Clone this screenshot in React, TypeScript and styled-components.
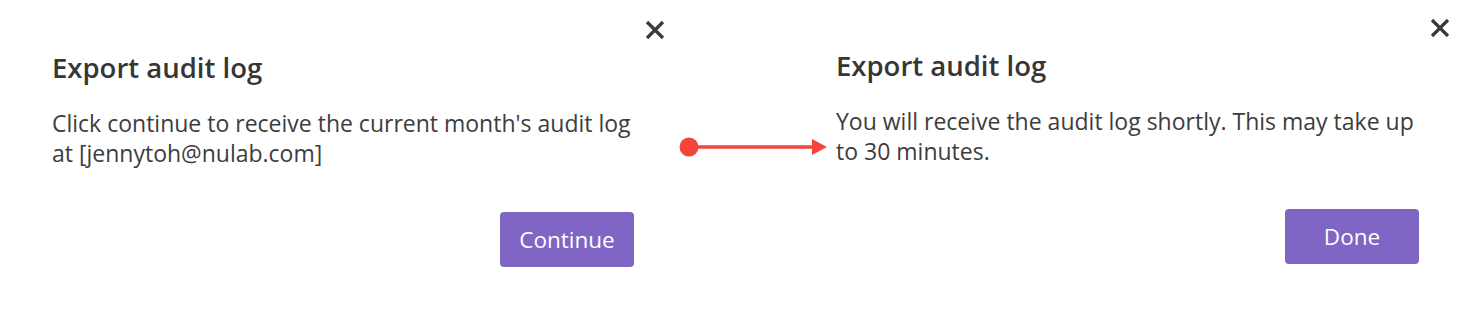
import * as React from 'react';
import styled, { createGlobalStyle } from 'styled-components';

const GlobalStyle = createGlobalStyle`
    html, body {
        margin: 0;
        padding: 0;
        background: #ffffff;
    }
    body {
        font-family: 'Open Sans', 'Noto Sans', sans-serif;
        color: #3a3a3a;
    }
`;

const Page = styled.div`
    display: flex;
    width: 1473px;
    height: 317px;
    background: #fff;
    overflow: hidden;
`;

const Dialog = styled.div<{ $width: number; $left: number; $top: number }>`
    position: relative;
    display: flex;
    flex-direction: column;
    width: ${p => p.$width}px;
    box-sizing: border-box;
    padding: ${p => p.$top}px 54px 0 ${p => p.$left}px;
`;

const CloseRow = styled.div`
    display: flex;
    justify-content: flex-end;
    margin-right: -31px;
    height: 20px;
`;

const CloseButton = styled.button`
    width: 20px;
    height: 20px;
    padding: 0;
    border: none;
    background: transparent;
    cursor: pointer;
    display: flex;
    align-items: center;
    justify-content: center;
`;

const Title = styled.h2`
    margin: 10px 0 0;
    font-size: 27.5px;
    font-weight: 600;
    line-height: 36px;
    color: #363636;
`;

const Body = styled.p<{ $max: number }>`
    margin: 22px 0 0;
    max-width: ${p => p.$max}px;
    font-size: 23px;
    line-height: 30px;
    color: #3d3d3d;
`;

const Footer = styled.div<{ $gap: number }>`
    display: flex;
    justify-content: flex-end;
    margin-top: ${p => p.$gap}px;
`;

const PrimaryButton = styled.button`
    width: 134px;
    height: 55px;
    border: none;
    border-radius: 4px;
    background: #7f66c4;
    color: #ffffff;
    font-family: 'Open Sans', 'Noto Sans', sans-serif;
    font-size: 22.5px;
    font-weight: 400;
    cursor: pointer;
`;

const Arrow = styled.svg`
    position: absolute;
    left: -10px;
    top: 135px;
`;

const CloseIcon = () => (
    <svg width="20" height="20" viewBox="0 0 20 20">
        <path d="M2 2 L18 18 M18 2 L2 18" stroke="#3a3a3a" strokeWidth="3.2" strokeLinecap="butt" />
    </svg>
);

const ExportDialog = (props) => {
    return (
        <Dialog $width={props.width} $left={props.left} $top={props.top}>
            {props.children}
            <CloseRow>
                <CloseButton aria-label="Close"><CloseIcon /></CloseButton>
            </CloseRow>
            <Title>Export audit log</Title>
            <Body $max={props.maxText}>{props.text}</Body>
            <Footer $gap={props.gap}>
                <PrimaryButton>{props.buttonText}</PrimaryButton>
            </Footer>
        </Dialog>
    );
};

export default function App() {
    return (
        <Page>
            <GlobalStyle />
            <ExportDialog
                width={688} left={52} top={20} gap={44} maxText={600}
                text="Click continue to receive the current month's audit log at [jennytoh@nulab.com]"
                buttonText="Continue"
            />
            <ExportDialog
                width={785} left={148} top={18} gap={43} maxText={580}
                text="You will receive the audit log shortly. This may take up to 30 minutes."
                buttonText="Done"
            >
                {/* annotation arrow between the two states */}
                <Arrow width="160" height="24" viewBox="0 0 160 24">
                    <circle cx="11" cy="12" r="9.5" fill="#f3453a" />
                    <line x1="11" y1="12" x2="136" y2="12" stroke="#f3453a" strokeWidth="3.5" />
                    <polygon points="134,4 149,12 134,20" fill="#f3453a" />
                </Arrow>
            </ExportDialog>
        </Page>
    );
}
